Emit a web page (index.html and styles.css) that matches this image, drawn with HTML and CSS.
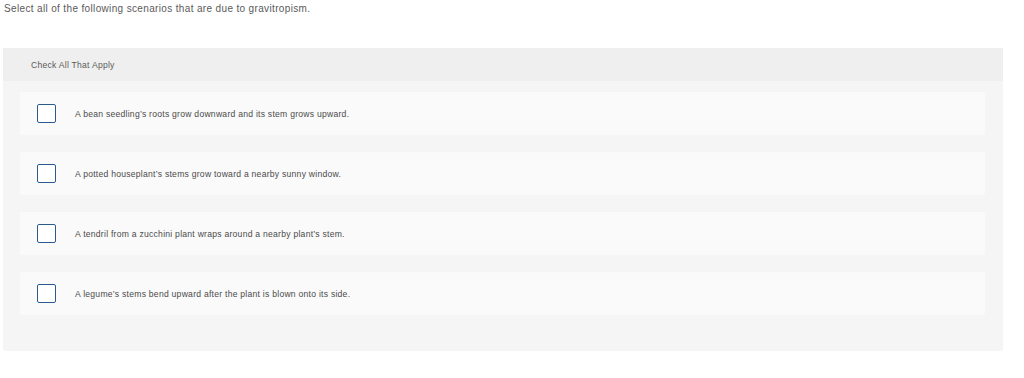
FILE: index.html
```html
<!DOCTYPE html>
<html lang="en">
<head>
    <meta charset="UTF-8">
    <title>Check All That Apply</title>
    <link rel="stylesheet" href="styles.css">
</head>
<body>
    <p class="prompt">Select all of the following scenarios that are due to gravitropism.</p>

    <section class="question">
        <div class="question-header">Check All That Apply</div>
        <ul class="choices">
            <li class="choice">
                <span class="checkbox"></span>
                <span class="choice-text">A bean seedling’s roots grow downward and its stem grows upward.</span>
            </li>
            <li class="choice">
                <span class="checkbox"></span>
                <span class="choice-text">A potted houseplant’s stems grow toward a nearby sunny window.</span>
            </li>
            <li class="choice">
                <span class="checkbox"></span>
                <span class="choice-text">A tendril from a zucchini plant wraps around a nearby plant’s stem.</span>
            </li>
            <li class="choice">
                <span class="checkbox"></span>
                <span class="choice-text">A legume’s stems bend upward after the plant is blown onto its side.</span>
            </li>
        </ul>
    </section>
</body>
</html>
```

FILE: styles.css
```css
* {
    margin: 0;
    padding: 0;
    box-sizing: border-box;
}

body {
    font-family: 'Liberation Sans', Arial, sans-serif;
    color: #4a4a4a;
    background: white;
    padding: 3px 3px 0 4px;
}

.prompt {
    font-size: 10px;
    line-height: 12px;
    letter-spacing: 0.35px;
    color: #5a5a5a;
}

.question {
    margin-top: 33px;
    margin-left: -1px;
    width: 1000px;
    background: #f5f5f5;
    border-radius: 2px;
    padding-bottom: 36px;
}

.question-header {
    height: 33px;
    background: #efefef;
    padding-left: 28px;
    display: flex;
    align-items: center;
    font-size: 8.6px;
    letter-spacing: 0.25px;
    color: #5a5a5a;
}

.choices {
    list-style: none;
    padding: 11px 18px 0 17px;
    display: flex;
    flex-direction: column;
    gap: 17px;
}

.choice {
    height: 43px;
    background: #fafafa;
    border-radius: 2px;
    display: flex;
    align-items: center;
    padding-left: 17px;
}

.checkbox {
    width: 19px;
    height: 19px;
    border: 1.5px solid #2b5b8e;
    border-radius: 2px;
    background: white;
    flex-shrink: 0;
}

.choice-text {
    margin-left: 19px;
    font-size: 8.6px;
    letter-spacing: 0.25px;
    color: #4a4a4a;
}
```
